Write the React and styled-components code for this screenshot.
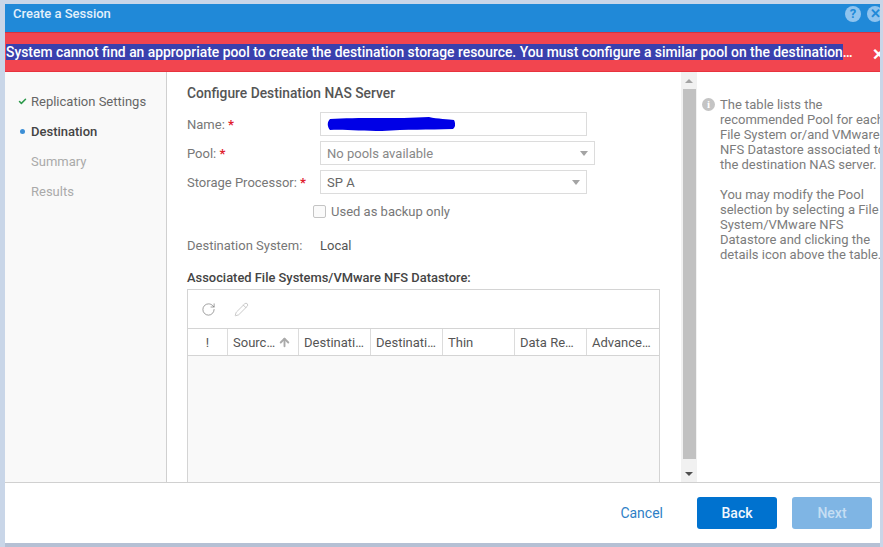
import React from 'react';
import styled, { createGlobalStyle } from 'styled-components';
import { Check, Pencil, RotateCw, ArrowUp } from 'lucide-react';

const GlobalStyle = createGlobalStyle`
  html, body {
    margin: 0;
    height: 100%;
    background: #c9d6e8;
    font-family: Roboto, "Liberation Sans", sans-serif;
    overflow: hidden;
  }
`;

const Dialog = styled.div`
  width: 875px;
  height: 539px;
  margin: 4px 0 0 5px;
  background: #fff;
  display: flex;
  flex-direction: column;
  overflow: hidden;
  box-shadow: 0 4px 0 #b5c0d4;
`;

const Header = styled.div`
  flex: 0 0 28px;
  box-sizing: border-box;
  background: #2089d8;
  display: flex;
  align-items: flex-start;
  justify-content: space-between;
  padding: 2px 0 0 8px;
  color: #e3f0fb;
  font-size: 13px;
  font-weight: 500;
  line-height: 15px;
`;

const HeaderIcons = styled.div`
  display: flex;
  gap: 6px;
  margin-right: -3px;
`;

const RoundIcon = styled.span`
  width: 16px;
  height: 16px;
  border-radius: 50%;
  background: #8fc4ef;
  color: #2089d8;
  font-size: 13px;
  font-weight: 700;
  line-height: 16px;
  text-align: center;
`;

const Banner = styled.div`
  flex: 0 0 40px;
  box-sizing: border-box;
  background: #f2454f;
  border-top: 1px solid #d8333e;
  border-bottom: 1px solid #e8333e;
  display: flex;
  align-items: center;
  justify-content: space-between;
  padding: 0 0 0 1px;
  color: #fff;
  font-size: 13.88px;
  font-weight: 500;
  white-space: nowrap;
`;

const Selected = styled.span`
  background: #3a40ad;
  line-height: 16px;
  display: inline-block;
`;

const BannerClose = styled.span`
  font-size: 16px;
  font-weight: 700;
  margin-right: -5px;
  margin-top: 4px;
`;

const Body = styled.div`
  flex: 0 0 411px;
  box-sizing: border-box;
  display: flex;
  min-height: 0;
  border-bottom: 1px solid #d0d0d0;
`;

const Sidebar = styled.nav`
  flex: 0 0 162px;
  box-sizing: border-box;
  background: #f9f9f9;
  border-right: 1px solid #d0d0d0;
  padding-top: 14px;
`;

const Step = styled.div`
  height: 30px;
  display: flex;
  align-items: center;
  padding-left: 13px;
  gap: 4px;
  font-size: 13px;
  font-weight: ${(p) => (p.$active ? 500 : 400)};
  color: ${(p) => p.$color};
`;

const StepMark = styled.span`
  flex: 0 0 9px;
  display: flex;
  align-items: center;
  justify-content: center;
`;

const Dot = styled.span`
  width: 5px;
  height: 5px;
  border-radius: 50%;
  background: #3d8fd6;
`;

const Main = styled.main`
  flex: 0 0 514px;
  box-sizing: border-box;
  padding: 13px 0 0 20px;
  overflow: hidden;
`;

const Title = styled.h2`
  margin: 0 0 11px;
  font-size: 13.8px;
  line-height: 16px;
  font-weight: 500;
  color: #555;
`;

const FormRow = styled.div`
  display: flex;
  align-items: center;
  height: 24px;
  margin-bottom: 5px;
  font-size: 13px;
  color: #777;
`;

const Label = styled.label`
  flex: 0 0 133px;
`;

const Required = styled.span`
  color: #e0202c;
  font-weight: 700;
`;

const Field = styled.div`
  box-sizing: border-box;
  width: ${(p) => p.$width}px;
  height: 24px;
  border: 1px solid #dcdcdc;
  display: flex;
  align-items: center;
  justify-content: space-between;
  padding: 0 6px;
  color: ${(p) => p.$color || '#666'};
`;

const Redaction = styled.svg`
  display: block;
`;

const Caret = styled.span`
  width: 0;
  height: 0;
  border-left: 4.5px solid transparent;
  border-right: 4.5px solid transparent;
  border-top: 5px solid #a4a4a4;
`;

const CheckRow = styled.div`
  display: flex;
  align-items: center;
  gap: 5px;
  margin: 7px 0 0 126px;
  height: 20px;
  font-size: 13px;
  color: #777;
`;

const CheckBox = styled.span`
  box-sizing: border-box;
  width: 13px;
  height: 13px;
  border: 1px solid #c4c4c4;
  border-radius: 2px;
  background: #fafafa;
`;

const InfoRow = styled.div`
  display: flex;
  margin-top: 14px;
  height: 20px;
  align-items: center;
  font-size: 13px;
  color: #777;
`;

const InfoValue = styled.span`
  color: #555;
`;

const SubTitle = styled.h3`
  margin: 15px 0 4px;
  font-size: 12.9px;
  line-height: 15px;
  font-weight: 500;
  color: #444;
`;

const Table = styled.div`
  box-sizing: border-box;
  width: 473px;
  height: 200px;
  border: 1px solid #d4d4d4;
  display: flex;
  flex-direction: column;
`;

const Toolbar = styled.div`
  flex: 0 0 38px;
  display: flex;
  align-items: center;
  gap: 18px;
  padding-left: 13px;
  border-bottom: 1px solid #d4d4d4;
`;

const HeadRow = styled.div`
  flex: 0 0 26px;
  display: grid;
  grid-template-columns: 39px 71px 72px 72px 72px 72px 1fr;
  border-bottom: 1px solid #d4d4d4;
`;

const HeadCell = styled.div`
  display: flex;
  align-items: center;
  justify-content: ${(p) => (p.$center ? 'center' : 'flex-start')};
  gap: 3px;
  padding-left: ${(p) => (p.$center ? 0 : 5)}px;
  border-left: ${(p) => (p.$first ? 'none' : '1px solid #dcdcdc')};
  font-size: 13px;
  color: #555;
  white-space: nowrap;
`;

const TableBody = styled.div`
  flex: 1;
  background: #f9f9f9;
`;

const Scrollbar = styled.div`
  flex: 0 0 16px;
  background: #f1f1f1;
  display: flex;
  flex-direction: column;
  align-items: center;
  justify-content: space-between;
`;

const ScrollArrow = styled.span`
  flex: 0 0 17px;
  display: flex;
  align-items: center;
  justify-content: center;
  &::before {
    content: '';
    border-left: 4px solid transparent;
    border-right: 4px solid transparent;
    ${(p) => (p.$up ? 'border-bottom: 4px solid #a3a3a3;' : 'border-top: 4px solid #505050;')}
  }
`;

const ScrollThumb = styled.div`
  flex: 1;
  width: 13px;
  background: #c1c1c1;
  margin-bottom: 6px;
`;

const HelpPanel = styled.aside`
  flex: 1;
  min-width: 0;
  display: flex;
  gap: 5px;
  padding: 25px 0 0 5px;
  overflow: hidden;
`;

const HelpIcon = styled.span`
  flex: 0 0 13px;
  height: 13px;
  margin-top: 1px;
  border-radius: 50%;
  background: #c4c4c4;
  color: #fff;
  font-family: "Liberation Serif", serif;
  font-size: 11px;
  font-weight: 700;
  line-height: 13px;
  text-align: center;
`;

const HelpText = styled.div`
  flex: 0 0 170px;
  font-size: 13px;
  line-height: 15px;
  color: #7c7c7c;
  white-space: nowrap;
`;

const HelpParagraph = styled.p`
  margin: 0 0 15px;
`;

const Footer = styled.footer`
  flex: 1;
  display: flex;
  align-items: center;
  justify-content: flex-end;
  gap: 15px;
  padding-right: 8px;
`;

const CancelLink = styled.a`
  font-size: 14px;
  color: #2f7fc6;
  margin-right: 19px;
`;

const Button = styled.button`
  width: 80px;
  height: 32px;
  border: none;
  border-radius: 3px;
  background: ${(p) => (p.disabled ? '#7fb5e4' : '#0072cf')};
  color: ${(p) => (p.disabled ? '#c5def3' : '#f0f7fd')};
  font-family: inherit;
  font-size: 14px;
  font-weight: 500;
`;

const steps = [
  { label: 'Replication Settings', color: '#666', mark: <Check size={9} strokeWidth={4} color="#2c9a4b" /> },
  { label: 'Destination', color: '#444', active: true, mark: <Dot /> },
  { label: 'Summary', color: '#aaa' },
  { label: 'Results', color: '#aaa' },
];

const columns = ['Destinati…', 'Destinati…', 'Thin', 'Data Re…', 'Advance…'];

export default function App() {
  return (
    <>
      <GlobalStyle />
      <Dialog>
        <Header>
          Create a Session
          <HeaderIcons>
            <RoundIcon>?</RoundIcon>
            <RoundIcon>✕</RoundIcon>
          </HeaderIcons>
        </Header>
        <Banner>
          <span>
            <Selected>
              System cannot find an appropriate pool to create the destination storage resource. You must configure a similar pool on the destination
            </Selected>
            …
          </span>
          <BannerClose>✕</BannerClose>
        </Banner>
        <Body>
          <Sidebar>
            {steps.map((s) => (
              <Step key={s.label} $color={s.color} $active={s.active}>
                <StepMark>{s.mark}</StepMark>
                {s.label}
              </Step>
            ))}
          </Sidebar>
          <Main>
            <Title>Configure Destination NAS Server</Title>
            <FormRow>
              <Label>Name: <Required>*</Required></Label>
              <Field $width={267}>
                <Redaction width="128" height="16" viewBox="0 0 128 16">
                  <path d="M3 3 C30 1 70 3 102 1 C110 3 122 3 127 4 C129 8 128 12 126 13 C100 14 80 13 55 15 C35 15 15 13 3 14 C0 10 0 6 3 3Z" fill="#0000e6" />
                </Redaction>
              </Field>
            </FormRow>
            <FormRow>
              <Label>Pool: <Required>*</Required></Label>
              <Field $width={275} $color="#888">
                No pools available
                <Caret />
              </Field>
            </FormRow>
            <FormRow>
              <Label>Storage Processor: <Required>*</Required></Label>
              <Field $width={267}>
                SP A
                <Caret />
              </Field>
            </FormRow>
            <CheckRow>
              <CheckBox />
              Used as backup only
            </CheckRow>
            <InfoRow>
              <Label>Destination System:</Label>
              <InfoValue>Local</InfoValue>
            </InfoRow>
            <SubTitle>Associated File Systems/VMware NFS Datastore:</SubTitle>
            <Table>
              <Toolbar>
                <RotateCw size={15} strokeWidth={1} color="#666" />
                <Pencil size={15} strokeWidth={1} color="#aaa" />
              </Toolbar>
              <HeadRow>
                <HeadCell $first $center>!</HeadCell>
                <HeadCell>
                  Sourc…
                  <ArrowUp size={13} strokeWidth={3.5} color="#aaa" />
                </HeadCell>
                {columns.map((c, i) => (
                  <HeadCell key={i}>{c}</HeadCell>
                ))}
              </HeadRow>
              <TableBody />
            </Table>
          </Main>
          <Scrollbar>
            <ScrollArrow $up />
            <ScrollThumb />
            <ScrollArrow />
          </Scrollbar>
          <HelpPanel>
            <HelpIcon>i</HelpIcon>
            <HelpText>
              <HelpParagraph>
                The table lists the<br />
                recommended Pool for each<br />
                File System or/and VMware<br />
                NFS Datastore associated to<br />
                the destination NAS server.
              </HelpParagraph>
              <HelpParagraph>
                You may modify the Pool<br />
                selection by selecting a File<br />
                System/VMware NFS<br />
                Datastore and clicking the<br />
                details icon above the table.
              </HelpParagraph>
            </HelpText>
          </HelpPanel>
        </Body>
        <Footer>
          <CancelLink>Cancel</CancelLink>
          <Button>Back</Button>
          <Button disabled>Next</Button>
        </Footer>
      </Dialog>
    </>
  );
}
